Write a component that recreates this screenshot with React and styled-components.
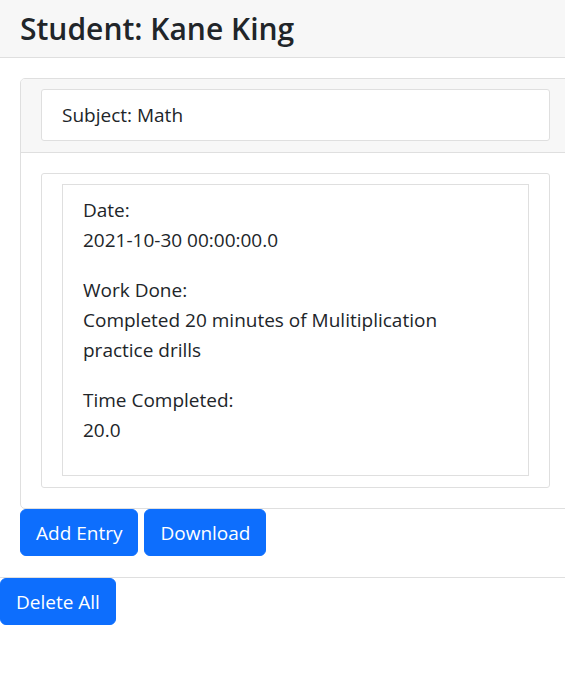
import React from 'react';
import styled, { createGlobalStyle } from 'styled-components';

const entries = [
  {
    id: 1,
    date: '2021-10-30 00:00:00.0',
    work: 'Completed 20 minutes of Mulitiplication practice drills',
    time: '20.0',
  },
];

const App = () => {
  return (
    <>
      <GlobalStyle />
      <StudentCard>
        <StudentHeader>
          <Title>Student: Kane King</Title>
        </StudentHeader>

        <StudentBody>
          <SubjectCard>
            <SubjectHeader>
              <SubjectLabel>Subject: Math</SubjectLabel>
            </SubjectHeader>

            <SubjectBody>
              <EntryList>
                {entries.map((entry) => (
                  <Entry key={entry.id}>
                    <Field>
                      Date:
                      <br />
                      {entry.date}
                    </Field>
                    <Field>
                      Work Done:
                      <br />
                      {entry.work}
                    </Field>
                    <Field>
                      Time Completed:
                      <br />
                      {entry.time}
                    </Field>
                  </Entry>
                ))}
              </EntryList>
            </SubjectBody>
          </SubjectCard>

          <ButtonRow>
            <Button type="button">Add Entry</Button>
            <Button type="button">Download</Button>
          </ButtonRow>
        </StudentBody>
      </StudentCard>

      <Button type="button">Delete All</Button>
    </>
  );
};

// Styled components
const GlobalStyle = createGlobalStyle`
  html, body {
    margin: 0;
    padding: 0;
    overflow-x: hidden;
    background: #fff;
  }

  body {
    font-family: "Open Sans", "Noto Sans", sans-serif;
    font-size: 19px;
    line-height: 30px;
    color: #212529;
  }

  * {
    box-sizing: border-box;
  }
`;

const StudentCard = styled.div`
  width: 591px;
  border-bottom: 1px solid #dfdfdf;
`;

const StudentHeader = styled.div`
  padding: 10px 20px 0;
  background: #f7f7f7;
  border-bottom: 1px solid #dfdfdf;
`;

const Title = styled.h4`
  margin: 0 0 10px;
  font-size: 30px;
  line-height: 37px;
  font-weight: 600;
`;

const StudentBody = styled.div`
  padding: 20px 20px 21px;
`;

const SubjectCard = styled.div`
  border: 1px solid #dfdfdf;
  border-radius: 5px;
  overflow: hidden;
`;

const SubjectHeader = styled.div`
  padding: 10px 20px 11px;
  background: #f7f7f7;
  border-bottom: 1px solid #dfdfdf;
`;

const SubjectLabel = styled.div`
  padding: 10px 20px;
  background: #fff;
  border: 1px solid #dfdfdf;
  border-radius: 3px;
`;

const SubjectBody = styled.div`
  padding: 20px;
`;

const EntryList = styled.div`
  padding: 10px 20px 11px;
  border: 1px solid #dfdfdf;
  border-radius: 3px;
`;

const Entry = styled.div`
  padding: 10px 20px;
  border: 1px solid #dfdfdf;
`;

const Field = styled.p`
  margin: 0 0 20px;
`;

const ButtonRow = styled.div`
  display: flex;
  gap: 6px;
`;

const Button = styled.button`
  display: inline-block;
  height: 47px;
  padding: 7px 15px;
  font-family: inherit;
  font-size: 19px;
  line-height: 30px;
  color: #fff;
  background: #0d6efd;
  border: 1px solid #0d6efd;
  border-radius: 6px;
  cursor: pointer;
`;

export default App;
